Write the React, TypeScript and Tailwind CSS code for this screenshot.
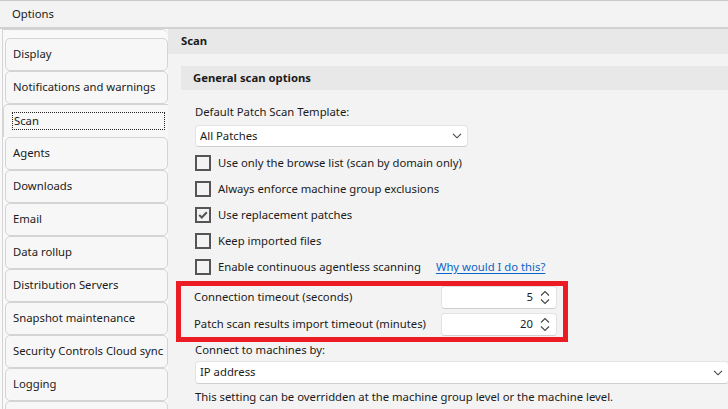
import type { ReactNode } from 'react';

const navItems = [
  'Display',
  'Notifications and warnings',
  'Scan',
  'Agents',
  'Downloads',
  'Email',
  'Data rollup',
  'Distribution Servers',
  'Snapshot maintenance',
  'Security Controls Cloud sync',
  'Logging',
  '',
];

const checks = [
  { label: 'Use only the browse list (scan by domain only)', checked: false },
  { label: 'Always enforce machine group exclusions', checked: false },
  { label: 'Use replacement patches', checked: true },
  { label: 'Keep imported files', checked: false },
  { label: 'Enable continuous agentless scanning', checked: false, link: 'Why would I do this?' },
];

const fieldClass = "flex items-center bg-white border border-[#e3e3e3] border-b-[#cfcfcf] rounded-[4px]";

function ChevronDown() {
  return (
    <svg width="10" height="6" viewBox="0 0 10 6" fill="none" stroke="#444" strokeWidth="1.1">
      <path d="M1 0.8 L5 4.8 L9 0.8" />
    </svg>
  );
}

function SpinArrows() {
  return (
    <svg width="10" height="15" viewBox="0 0 10 15" fill="none" stroke="#444" strokeWidth="1.1">
      <path d="M1 5.5 L5 1.5 L9 5.5" />
      <path d="M1 9.5 L5 13.5 L9 9.5" />
    </svg>
  );
}

function Checkbox({ checked }: { checked: boolean }) {
  return (
    <span className="flex items-center justify-center w-[16px] h-[16px] border-2 border-[#555] bg-[#f3f3f3] shrink-0">
      {checked && (
        <svg width="10" height="8" viewBox="0 0 10 8" fill="none" stroke="#555" strokeWidth="2">
          <path d="M1.2 4 L3.8 6.5 L8.8 1.2" />
        </svg>
      )}
    </span>
  );
}

function SpinRow({ label, value }: { label: string; value: string }) {
  return (
    <div className="flex items-center h-[23px]">
      <span className="flex-1">{label}</span>
      <div className={`${fieldClass} w-[116px] h-[23px] justify-end pr-[6px] gap-[7px]`}>
        <span>{value}</span>
        <SpinArrows />
      </div>
    </div>
  );
}

function Select({ value, className }: { value: string; className: string }) {
  return (
    <div className={`${fieldClass} ${className} pl-[4px] pr-[5px] justify-between`}>
      <span>{value}</span>
      <ChevronDown />
    </div>
  );
}

function NavItem({ label, selected }: { label: string; selected: boolean }): ReactNode {
  if (selected) {
    return (
      <div className="h-[33px] -ml-[2px] border-l border-t border-[#d4d4d4] rounded-tl-[5px] flex items-center pl-[8px] pr-[3px] bg-[#f7f7f7]">
        <span className="flex-1 h-[18px] border border-dotted border-[#222] flex items-center pl-[1px] leading-none">
          {label}
        </span>
      </div>
    );
  }
  return (
    <div className="h-[33px] border border-[#d4d4d4] rounded-[5px] flex items-center pl-[7px] whitespace-nowrap bg-[#f7f7f7]">
      {label}
    </div>
  );
}

export default function App() {
  return (
    <div className="w-[728px] h-[409px] overflow-hidden flex flex-col bg-[#f3f3f3] text-[#1b1b1b] text-[11.3px] font-['Noto_Sans','Liberation_Sans',sans-serif]">
      <div className="h-[29px] shrink-0 flex items-center pl-[12px] border-t border-b-2 border-t-[#c9c9c9] border-b-[#d2d2d2]">
        Options
      </div>
      <div className="flex flex-1 min-h-0">
        <nav className="w-[168px] shrink-0 bg-[#f9f9f9] pl-[2px]">
          <div className="h-full border-l border-t border-[#d4d4d4] rounded-tr-[6px] pl-[2px] pt-[8px]">
            {navItems.map((item, i) => (
              <NavItem key={i} label={item} selected={item === 'Scan'} />
            ))}
          </div>
        </nav>
        <main className="flex-1 min-w-0 flex flex-col">
          <div className="h-[25px] shrink-0 bg-[#e8e8e8] flex items-center pl-[13px] font-bold">Scan</div>
          <div className="pl-[13px] pt-[12px]">
            <div className="h-[24px] bg-[#e8e8e8] flex items-center pl-[12px] font-bold">General scan options</div>
            <div className="pl-[14px]">
              <div className="h-[16px] mt-[14px] flex items-center">Default Patch Scan Template:</div>
              <Select value="All Patches" className="mt-[5px] w-[273px] h-[22px]" />
              <div className="mt-[3px] flex flex-col">
                {checks.map((c) => (
                  <div key={c.label} className="h-[26px] flex items-center gap-[7px]">
                    <Checkbox checked={c.checked} />
                    <span>{c.label}</span>
                    {c.link && (
                      <a className="ml-[8px] text-[#0a64c8] underline underline-offset-2 cursor-pointer">{c.link}</a>
                    )}
                  </div>
                ))}
              </div>
              <div className="-ml-[19px] mt-[1px] w-[392px] border-[5px] border-[#ec1c24] flex flex-col gap-[4px] pl-[13px] pr-[6px] pb-[1px]">
                <SpinRow label="Connection timeout (seconds)" value="5" />
                <SpinRow label="Patch scan results import timeout (minutes)" value="20" />
              </div>
              <div className="h-[16px] flex items-center">Connect to machines by:</div>
              <Select value="IP address" className="mt-[3px] -mr-[1px] h-[23px]" />
              <div className="h-[16px] mt-[5px] flex items-center whitespace-nowrap">
                This setting can be overridden at the machine group level or the machine level.
              </div>
            </div>
          </div>
        </main>
      </div>
    </div>
  );
}
